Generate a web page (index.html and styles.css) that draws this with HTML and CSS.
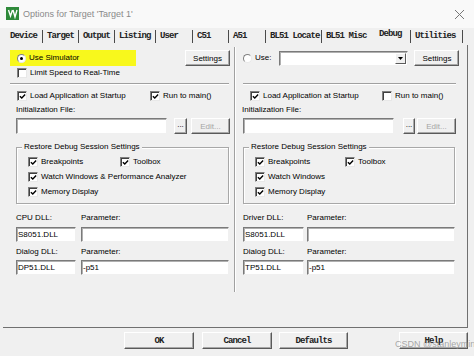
FILE: index.html
```html
<!DOCTYPE html>
<html>
<head>
<meta charset="utf-8">
<link rel="stylesheet" href="styles.css">
</head>
<body>
<div class="window">
  <div class="titlebar">
    <svg class="appicon" width="13" height="13" viewBox="0 0 13 13">
      <rect x="0" y="0" width="13" height="13" fill="#2f8a3a"/>
      <path d="M2.5 3 L4.5 9 L6.5 3 M7 3 L9 10 L11 3" stroke="#fff" stroke-width="1.4" fill="none"/>
    </svg>
    <span class="title">Options for Target 'Target 1'</span>
    <svg class="close" width="11" height="11" viewBox="0 0 11 11">
      <path d="M1 1 L10 10 M10 1 L1 10" stroke="#777" stroke-width="1"/>
    </svg>
  </div>

  <div class="tabs">
    <span class="tab w37">Device</span>
    <span class="tab w36">Target</span>
    <span class="tab w36">Output</span>
    <span class="tab w41">Listing</span>
    <span class="tab w37">User</span>
    <span class="tab w36">C51</span>
    <span class="tab w37">A51</span>
    <span class="tab w56">BL51 Locate</span>
    <span class="tab w52 nosep">BL51 Misc</span>
    <span class="tab w37 sel">Debug</span>
    <span class="tab w52">Utilities</span>
  </div>

  <div class="panel">
    <div class="half left">
      <div class="row1">
        <div class="hl"><span class="radio on"></span><span class="lbl">Use Simulator</span></div>
        <span class="btn settings">Settings</span>
      </div>
      <div class="row2"><span class="cb"></span><span class="lbl">Limit Speed to Real-Time</span></div>
      <div class="sep"></div>
      <div class="row3">
        <span class="item w133"><span class="cb on"><svg viewBox="0 0 8 8"><path d="M1 3.6 L3.2 5.8 L7 1.8" stroke="#000" stroke-width="1.6" fill="none"/></svg></span><span class="lbl">Load Application at Startup</span></span>
        <span class="item"><span class="cb on"><svg viewBox="0 0 8 8"><path d="M1 3.6 L3.2 5.8 L7 1.8" stroke="#000" stroke-width="1.6" fill="none"/></svg></span><span class="lbl">Run to main()</span></span>
      </div>
      <div class="initlbl">Initialization File:</div>
      <div class="inputrow">
        <span class="field initfield"></span>
        <span class="btn dots">...</span>
        <span class="btn edit">Edit...</span>
      </div>
      <div class="group">
        <div class="gtitle">Restore Debug Session Settings</div>
        <div class="grow">
          <span class="item w92"><span class="cb on"><svg viewBox="0 0 8 8"><path d="M1 3.6 L3.2 5.8 L7 1.8" stroke="#000" stroke-width="1.6" fill="none"/></svg></span><span class="lbl">Breakpoints</span></span>
          <span class="item"><span class="cb on"><svg viewBox="0 0 8 8"><path d="M1 3.6 L3.2 5.8 L7 1.8" stroke="#000" stroke-width="1.6" fill="none"/></svg></span><span class="lbl">Toolbox</span></span>
        </div>
        <div class="grow"><span class="item"><span class="cb on"><svg viewBox="0 0 8 8"><path d="M1 3.6 L3.2 5.8 L7 1.8" stroke="#000" stroke-width="1.6" fill="none"/></svg></span><span class="lbl">Watch Windows &amp; Performance Analyzer</span></span></div>
        <div class="grow"><span class="item"><span class="cb on"><svg viewBox="0 0 8 8"><path d="M1 3.6 L3.2 5.8 L7 1.8" stroke="#000" stroke-width="1.6" fill="none"/></svg></span><span class="lbl">Memory Display</span></span></div>
      </div>
      <div class="dlllbl"><span class="w65">CPU DLL:</span><span>Parameter:</span></div>
      <div class="dllrow first"><span class="field dll">S8051.DLL</span><span class="field param"></span></div>
      <div class="dlllbl second"><span class="w65">Dialog DLL:</span><span>Parameter:</span></div>
      <div class="dllrow"><span class="field dll">DP51.DLL</span><span class="field param">-p51</span></div>
    </div>

    <div class="divider"></div>

    <div class="half right">
      <div class="row1">
        <span class="radio"></span><span class="lbl">Use:</span>
        <span class="field combo"><span class="combobtn"><svg width="5" height="3" viewBox="0 0 5 3"><path d="M0 0 L5 0 L2.5 3 Z" fill="#000"/></svg></span></span>
        <span class="btn settings">Settings</span>
      </div>
      <div class="row2"></div>
      <div class="sep"></div>
      <div class="row3">
        <span class="item w132"><span class="cb on"><svg viewBox="0 0 8 8"><path d="M1 3.6 L3.2 5.8 L7 1.8" stroke="#000" stroke-width="1.6" fill="none"/></svg></span><span class="lbl">Load Application at Startup</span></span>
        <span class="item"><span class="cb"></span><span class="lbl">Run to main()</span></span>
      </div>
      <div class="initlbl">Initialization File:</div>
      <div class="inputrow">
        <span class="field initfield"></span>
        <span class="btn dots r">...</span>
        <span class="btn edit r">Edit...</span>
      </div>
      <div class="group">
        <div class="gtitle">Restore Debug Session Settings</div>
        <div class="grow">
          <span class="item w90"><span class="cb on"><svg viewBox="0 0 8 8"><path d="M1 3.6 L3.2 5.8 L7 1.8" stroke="#000" stroke-width="1.6" fill="none"/></svg></span><span class="lbl">Breakpoints</span></span>
          <span class="item"><span class="cb on"><svg viewBox="0 0 8 8"><path d="M1 3.6 L3.2 5.8 L7 1.8" stroke="#000" stroke-width="1.6" fill="none"/></svg></span><span class="lbl">Toolbox</span></span>
        </div>
        <div class="grow"><span class="item"><span class="cb on"><svg viewBox="0 0 8 8"><path d="M1 3.6 L3.2 5.8 L7 1.8" stroke="#000" stroke-width="1.6" fill="none"/></svg></span><span class="lbl">Watch Windows</span></span></div>
        <div class="grow"><span class="item"><span class="cb on"><svg viewBox="0 0 8 8"><path d="M1 3.6 L3.2 5.8 L7 1.8" stroke="#000" stroke-width="1.6" fill="none"/></svg></span><span class="lbl">Memory Display</span></span></div>
      </div>
      <div class="dlllbl"><span class="w64">Driver DLL:</span><span>Parameter:</span></div>
      <div class="dllrow first"><span class="field dll r">S8051.DLL</span><span class="field param"></span></div>
      <div class="dlllbl second"><span class="w64">Dialog DLL:</span><span>Parameter:</span></div>
      <div class="dllrow"><span class="field dll r">TP51.DLL</span><span class="field param">-p51</span></div>
    </div>
  </div>

  <div class="buttons">
    <span class="btn bbtn ok">OK</span>
    <span class="btn bbtn cancel">Cancel</span>
    <span class="btn bbtn defaults">Defaults</span>
    <span class="btn bbtn help">Help</span>
  </div>

  <div class="watermark">CSDN @stanleymin</div>
</div>
</body>
</html>
```

FILE: styles.css
```css
html, body {
  margin: 0;
  padding: 0;
  background: #f0f0f0;
}
body {
  font-family: "Liberation Sans", Arial, sans-serif;
  font-size: 8px;
  color: #000;
}
.window {
  position: relative;
  width: 474px;
  height: 356px;
  overflow: hidden;
  background: #f0f0f0;
}
.titlebar {
  height: 28px;
  background: #f9f9f9;
  display: flex;
  align-items: center;
}
.appicon {
  margin-left: 6px;
  margin-top: -1px;
}
.title {
  margin-left: 4px;
  font-size: 9px;
  color: #8a8a8a;
}
.close {
  margin-left: auto;
  margin-right: 9px;
}

/* tabs */
.tabs {
  display: flex;
  height: 17px;
  padding-left: 6px;
  font-family: "Liberation Mono", "DejaVu Sans Mono", monospace;
  font-weight: bold;
  font-size: 9px;
  letter-spacing: -0.9px;
  color: #222;
}
.tab {
  box-sizing: border-box;
  height: 13px;
  margin-top: 2px;
  line-height: 13px;
  padding-left: 4px;
  border-right: 1px solid #4a4a4a;
  white-space: nowrap;
}
.tab.nosep { border-right: none; }
.tab.sel { line-height: 8px; padding-left: 5px; }
.w36 { width: 36px; }
.w37 { width: 37px; }
.w41 { width: 41px; }
.w52 { width: 52px; }
.w56 { width: 56px; }

/* panel */
.panel {
  display: flex;
  margin-left: 3px;
  width: 465px;
  height: 283px;
  box-sizing: border-box;
  border-right: 1px solid #707070;
  border-bottom: 1px solid #707070;
}
.half {
  display: flex;
  flex-direction: column;
  box-sizing: border-box;
}
.half.left {
  width: 231px;
  padding-left: 7px;
  padding-right: 4px;
}
.half.right {
  width: 231px;
  padding-left: 7px;
  padding-right: 8px;
}
.divider {
  width: 0;
  height: 245px;
  margin-top: 2px;
  border-left: 1px solid #a0a0a0;
  border-right: 1px solid #fff;
}

.lbl {
  white-space: nowrap;
  line-height: 10px;
}
.row1 {
  display: flex;
  align-items: center;
  margin-top: 5px;
  height: 16px;
}
.hl {
  display: flex;
  align-items: center;
  width: 126px;
  height: 16px;
  padding-left: 7px;
  box-sizing: border-box;
  background: #f8f81c;
}
.radio {
  box-sizing: border-box;
  width: 9px;
  height: 9px;
  border-radius: 50%;
  border: 1px solid;
  border-color: #808080 #e8e8e8 #e8e8e8 #808080;
  background: #fff;
  margin-right: 3px;
  position: relative;
  flex: none;
}
.radio.on::after {
  content: "";
  position: absolute;
  left: 2px;
  top: 2px;
  width: 3px;
  height: 3px;
  border-radius: 50%;
  background: #000;
}
.btn {
  box-sizing: border-box;
  display: flex;
  align-items: center;
  justify-content: center;
  background: #f0f0f0;
  border: 1px solid;
  border-color: #fff #5a5a5a #5a5a5a #fff;
  box-shadow: inset -1px -1px 0 #a8a8a8;
  white-space: nowrap;
  flex: none;
}
.settings {
  margin-left: auto;
  width: 45px;
  height: 16px;
}
.row2 {
  display: flex;
  align-items: center;
  margin-top: 2px;
  height: 10px;
  padding-left: 7px;
}
.cb {
  box-sizing: border-box;
  width: 10px;
  height: 10px;
  border: 1px solid;
  border-color: #808080 #e8e8e8 #e8e8e8 #808080;
  box-shadow: inset 1px 1px 0 #404040;
  background: #fff;
  margin-right: 3px;
  flex: none;
  display: flex;
  align-items: center;
  justify-content: center;
}
.cb svg {
  width: 7px;
  height: 7px;
  margin: 1px 0 0 1px;
}
.sep {
  margin-top: 5px;
  margin-right: 1px;
  height: 0;
  border-top: 1px solid #a0a0a0;
  border-bottom: 1px solid #fff;
}
.right .sep { margin-right: 3px; }
.row3 {
  display: flex;
  align-items: center;
  margin-top: 6px;
  height: 10px;
  padding-left: 7px;
}
.item {
  display: flex;
  align-items: center;
}
.w133 { width: 133px; }
.w132 { width: 132px; }
.w92 { width: 92px; }
.w90 { width: 90px; }
.w65 { width: 65px; }
.w64 { width: 64px; }

.initlbl {
  margin-top: 4px;
  height: 10px;
  line-height: 10px;
  padding-left: 6px;
}
.right .initlbl { padding-left: 0; margin-left: -1px; }
.inputrow {
  display: flex;
  margin-top: 3px;
  height: 16px;
  padding-left: 6px;
}
.right .inputrow { padding-left: 0; }
.field {
  box-sizing: border-box;
  display: flex;
  align-items: center;
  background: #fff;
  border: 1px solid;
  border-color: #7a7a7a #f0f0f0 #f0f0f0 #7a7a7a;
  box-shadow: inset 1px 1px 0 #b0b0b0;
  padding-left: 2px;
  white-space: nowrap;
  flex: none;
}
.initfield {
  width: 151px;
  height: 16px;
}
.dots {
  width: 13px;
  height: 16px;
  margin-left: 7px;
  align-items: flex-end;
  padding-bottom: 4px;
  line-height: 8px;
}
.dots.r { width: 12px; margin-left: 9px; }
.edit {
  width: 39px;
  height: 16px;
  margin-left: 4px;
  color: #a5a5a5;
}
.edit.r { margin-left: 2px; }

.group {
  box-sizing: border-box;
  margin-top: 13px;
  margin-left: 6px;
  width: 213px;
  height: 57px;
  border: 1px solid #a8a8a8;
  box-shadow: inset 1px 1px 0 #fff, 1px 1px 0 #fff;
}
.right .group { margin-left: 0; width: 212px; }
.gtitle {
  margin-top: -6px;
  margin-left: 5px;
  padding: 0 2px;
  width: fit-content;
  height: 10px;
  line-height: 10px;
  background: #f0f0f0;
  white-space: nowrap;
}
.grow {
  display: flex;
  align-items: center;
  height: 10px;
  margin-top: 5px;
  padding-left: 11px;
}

.dlllbl {
  display: flex;
  margin-top: 9px;
  height: 10px;
  line-height: 10px;
  padding-left: 6px;
}
.dlllbl.second { margin-top: 5px; }
.right .dlllbl { padding-left: 0; }
.dllrow {
  display: flex;
  margin-top: 3px;
  height: 15px;
  padding-left: 6px;
}
.dllrow.first { margin-top: 4px; }
.right .dllrow { padding-left: 0; }
.dll {
  width: 60px;
  height: 15px;
  padding-left: 1px;
}
.dll.r { width: 61px; }
.param {
  width: 148px;
  height: 15px;
  margin-left: 5px;
  padding-left: 1px;
}
.right .param { margin-left: 3px; }

.combo {
  margin-left: 8px;
  width: 129px;
  height: 15px;
  justify-content: flex-end;
  padding: 1px;
}
.combobtn {
  box-sizing: border-box;
  width: 11px;
  height: 11px;
  display: flex;
  align-items: center;
  justify-content: center;
  background: #f0f0f0;
  border: 1px solid;
  border-color: #fff #5a5a5a #5a5a5a #fff;
}
.right .settings { margin-left: 6px; }

/* bottom buttons */
.buttons {
  display: flex;
  margin-top: 4px;
  height: 17px;
  padding-left: 124px;
  font-family: "Liberation Mono", "DejaVu Sans Mono", monospace;
  font-weight: bold;
  font-size: 9px;
  letter-spacing: -0.9px;
  color: #222;
}
.bbtn {
  height: 17px;
  width: 70px;
}
.cancel { margin-left: 8px; }
.defaults { margin-left: 7px; width: 69px; }
.help { margin-left: 51px; width: 69px; }

.watermark {
  position: absolute;
  left: 395px;
  top: 339px;
  font-size: 9px;
  color: rgba(140, 140, 140, 0.75);
  white-space: nowrap;
}
```
